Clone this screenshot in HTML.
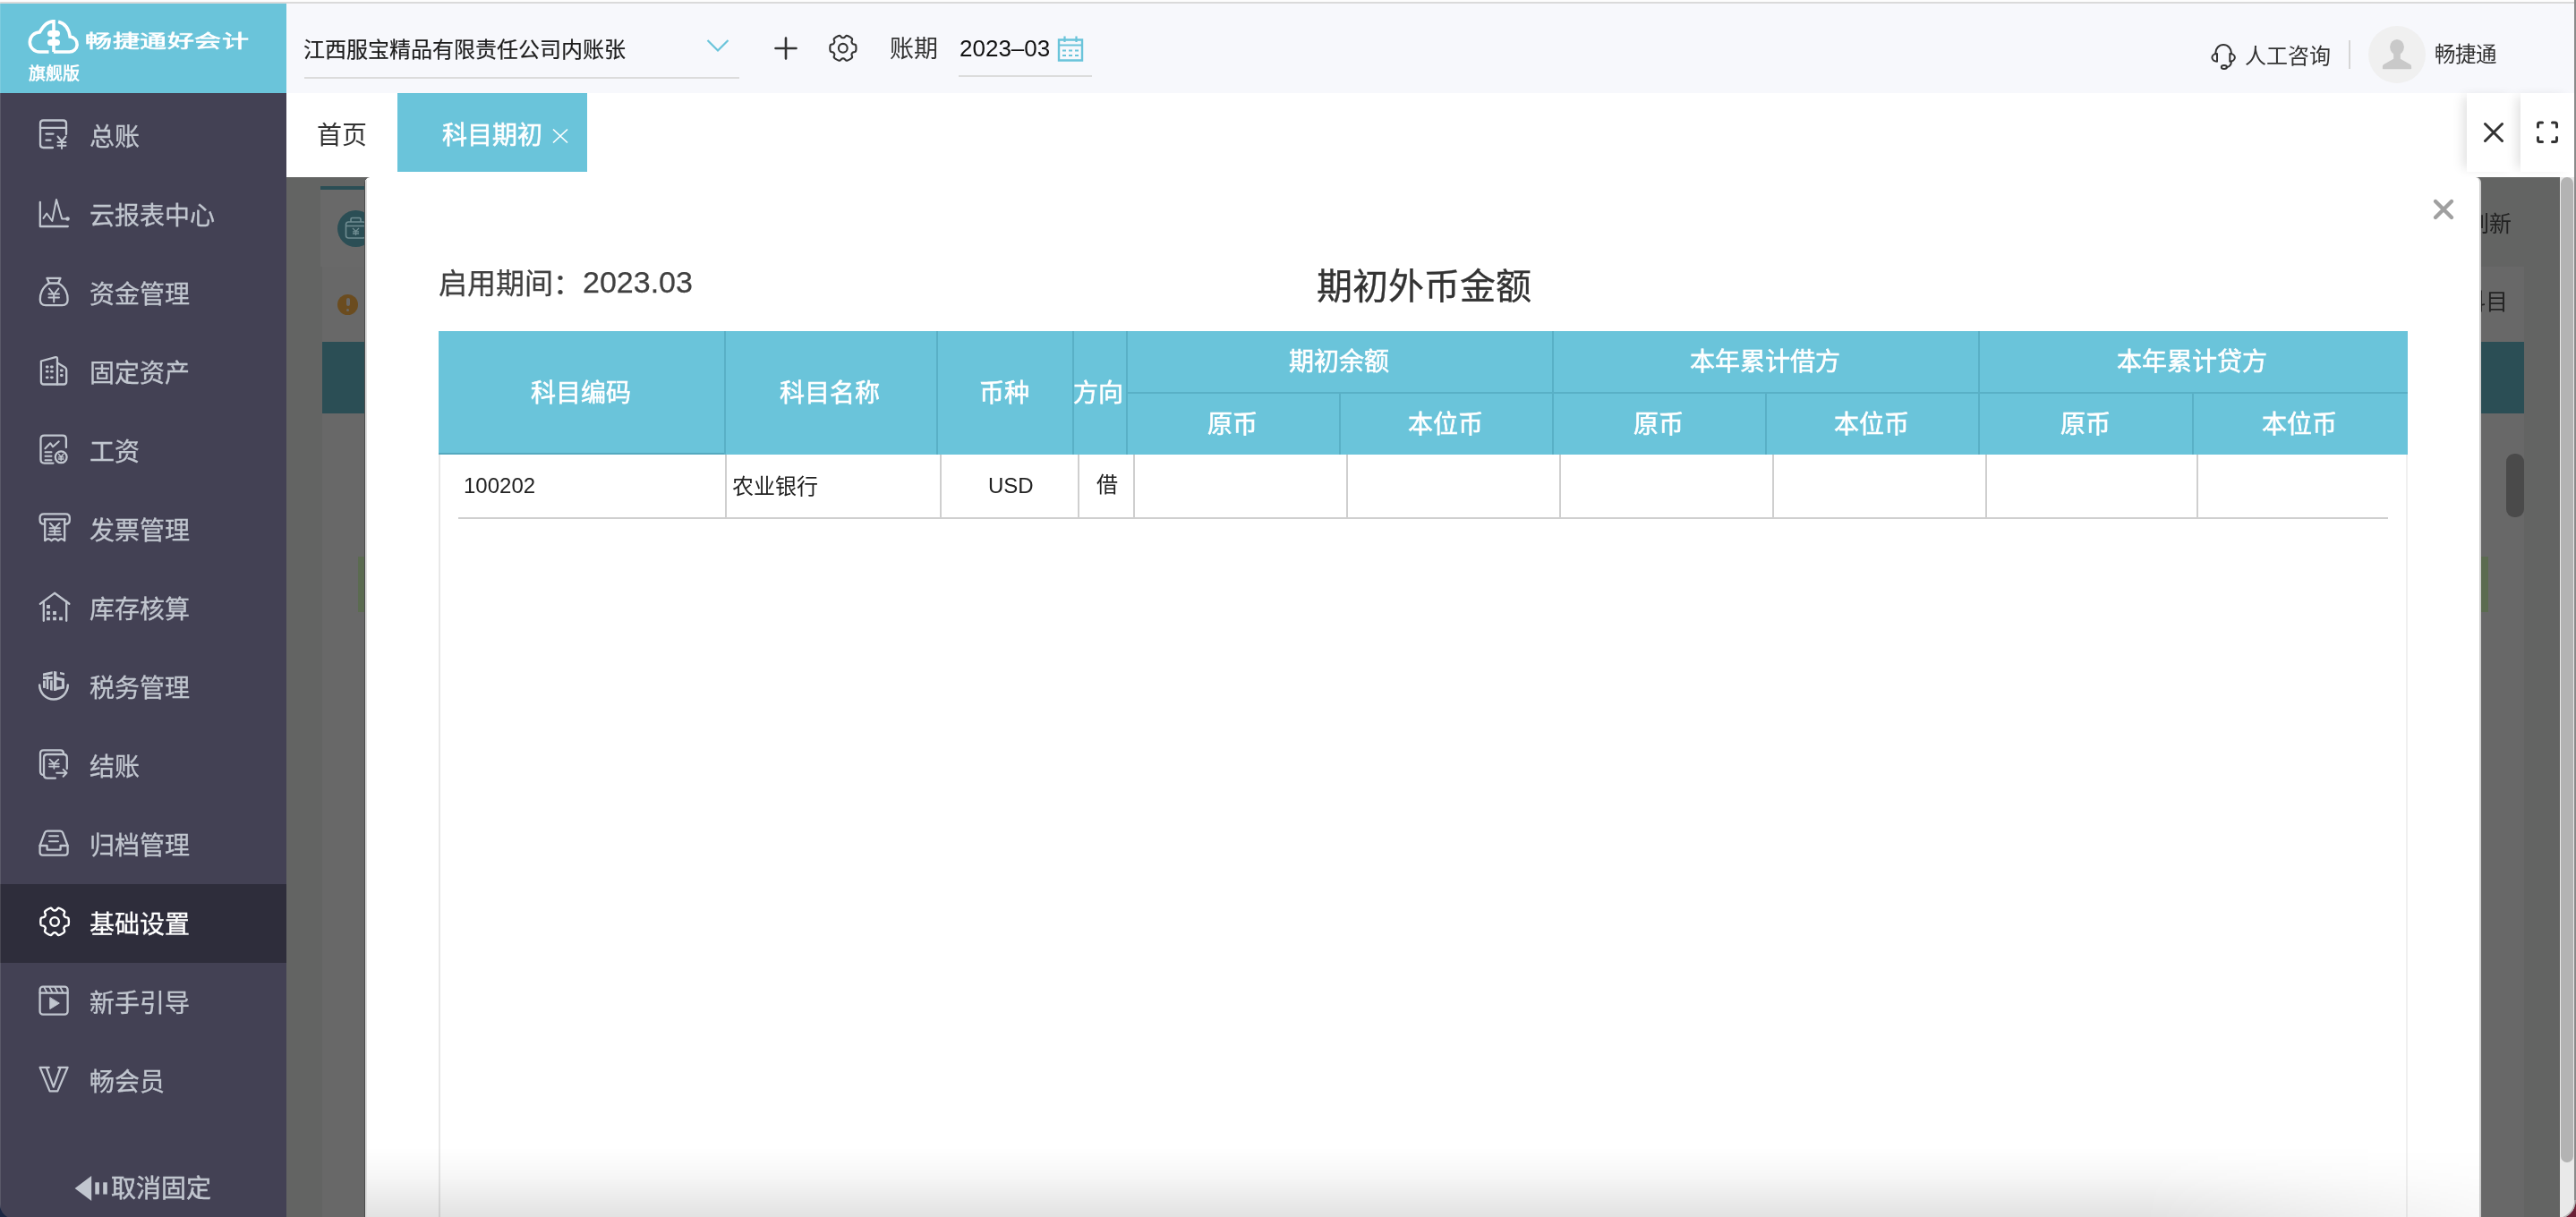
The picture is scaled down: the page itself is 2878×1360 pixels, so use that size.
<!DOCTYPE html>
<html lang="zh-CN">
<head>
<meta charset="utf-8">
<style>
html,body{margin:0;padding:0;width:2878px;height:1360px;overflow:hidden;background:#fff;font-family:"Liberation Sans",sans-serif;}
div,span,svg{position:absolute;box-sizing:border-box;}
.t{white-space:nowrap;line-height:1;will-change:transform;}
#sidebar .it{left:0;width:320px;height:88px;}
#sidebar .it .tx{left:100px;top:31px;font-size:28px;color:#c1c6cf;}
#sidebar .it svg{left:40px;top:26px;width:40px;height:38px;}
.sb{-webkit-text-stroke:0.3px currentColor;}
.th{color:#fff;font-size:28px;font-weight:500;-webkit-text-stroke:0.6px #fff;}
.vl{width:1px;background:#5aaec4;}
.bl{width:2px;background:#d3d3d3;}
</style>
</head>
<body>
<!-- top thin line -->
<div style="left:0;top:0;width:2878px;height:2px;background:#fdfdfd"></div>
<div style="left:0;top:2px;width:2878px;height:2px;background:#dadada"></div>

<!-- logo -->
<div id="logo" style="left:0;top:4px;width:320px;height:100px;background:#6ac4da"></div>

<!-- header -->
<div id="header" style="left:320px;top:4px;width:2558px;height:100px;background:#f7f8fc"></div>

<!-- sidebar -->
<div id="sidebar" style="left:0;top:104px;width:320px;height:1256px;background:#434154"></div>
<div style="left:0;top:988px;width:320px;height:88px;background:#2e2d3b"></div>
<div class="t sb" style="left:100px;top:140px;font-size:28px;color:#c1c6cf">总账</div>
<div class="t sb" style="left:100px;top:228px;font-size:28px;color:#c1c6cf">云报表中心</div>
<div class="t sb" style="left:100px;top:316px;font-size:28px;color:#c1c6cf">资金管理</div>
<div class="t sb" style="left:100px;top:404px;font-size:28px;color:#c1c6cf">固定资产</div>
<div class="t sb" style="left:100px;top:492px;font-size:28px;color:#c1c6cf">工资</div>
<div class="t sb" style="left:100px;top:580px;font-size:28px;color:#c1c6cf">发票管理</div>
<div class="t sb" style="left:100px;top:668px;font-size:28px;color:#c1c6cf">库存核算</div>
<div class="t sb" style="left:100px;top:756px;font-size:28px;color:#c1c6cf">税务管理</div>
<div class="t sb" style="left:100px;top:844px;font-size:28px;color:#c1c6cf">结账</div>
<div class="t sb" style="left:100px;top:932px;font-size:28px;color:#c1c6cf">归档管理</div>
<div class="t sb" style="left:100px;top:1020px;font-size:28px;color:#fff">基础设置</div>
<div class="t sb" style="left:100px;top:1108px;font-size:28px;color:#c1c6cf">新手引导</div>
<div class="t sb" style="left:100px;top:1196px;font-size:28px;color:#c1c6cf">畅会员</div>

<svg id="sideicons" style="left:0;top:0;width:320px;height:1360px" width="320" height="1360" viewBox="0 0 320 1360" fill="none" stroke="#c1c6cf" stroke-width="2.3" stroke-linecap="round" stroke-linejoin="round">
<!-- 总账 -->
<path d="M59,165 L48.5,165 Q45,165 45,161.5 L45,138 Q45,134.5 48.5,134.5 L70.5,134.5 Q74,134.5 74,138 L74,150"/>
<path d="M45,142.8 L74,142.8 M51.5,149.6 L59.5,149.6 M51.5,156.7 L56.5,156.7"/>
<path d="M64.5,152.5 L69,158 L73.5,152.5 M69,158 L69,166 M64.5,159 L73.5,159 M64.5,162.8 L73.5,162.8" stroke-width="2"/>
<!-- 云报表中心 -->
<path d="M44.8,226 L44.8,253 L75.8,253"/>
<path d="M48.5,243.9 L52.2,238.5 L58.3,247 L63,223 L69.2,244.5 L74,244.5" stroke-width="2"/>
<circle cx="75.5" cy="244.5" r="2.3" fill="#c1c6cf" stroke="none"/>
<!-- 资金管理 -->
<path d="M52.5,310.8 L67.5,310.8 L65,316.5 L55,316.5 Z"/>
<path d="M55,316.5 C47,321 44.5,329 44.8,335 Q45,341.2 51,341.2 L69.5,341.2 Q75.5,341.2 75.6,335 C76,329 73.5,321 65,316.5"/>
<path d="M55,322.5 L60.2,329 L65.4,322.5 M60.2,329 L60.2,337.5 M54.5,328.6 L66,328.6 M54.5,332.6 L66,332.6" stroke-width="2"/>
<!-- 固定资产 -->
<path d="M45.9,403.5 L62,399.2 Q64,398.8 64,401 L64,429.5 L49,429.5 Q45.9,429.5 45.9,426.5 Z"/>
<path d="M64,405.5 L72.5,410.5 Q74.2,411.5 74.2,413.5 L74.2,426.5 Q74.2,429.5 71,429.5 L64,429.5"/>
<path d="M52.2,410 L53.2,410 M57.4,410 L58.4,410 M52.2,415.2 L53.2,415.2 M57.4,415.2 L58.4,415.2 M52.2,421.8 L53.2,421.8 M57.4,421.8 L58.4,421.8 M68.3,414 L69.3,414 M68.3,419.5 L69.3,419.5" stroke-width="2.8"/>
<!-- 工资 -->
<path d="M59.5,517.6 L49.5,517.6 Q45.5,517.6 45.5,513.6 L45.5,490.7 Q45.5,486.7 49.5,486.7 L69.9,486.7 Q73.9,486.7 73.9,490.7 L73.9,500"/>
<path d="M50.4,501.3 L56.2,495.2 L59.1,499.3 L65.8,493.3" stroke-width="2"/>
<path d="M50.5,505.3 L57.5,505.3 M50.5,509.8 L57.5,509.8 M50.5,514.2 L57.5,514.2" stroke-width="2"/>
<circle cx="68.2" cy="510.8" r="6.4"/>
<path d="M65.6,507.5 L68.2,510.6 L70.8,507.5 M68.2,510.6 L68.2,514.8 M65.4,510.9 L71,510.9 M65.4,513 L71,513" stroke-width="1.4"/>
<!-- 发票管理 -->
<path d="M49,585.6 Q44.6,585.6 44.6,581 L44.6,578.8 Q44.6,574.4 49,574.4 L73.3,574.4 Q77.8,574.4 77.8,578.8 L77.8,581 Q77.8,585.6 73.3,585.6"/>
<path d="M49.6,580.3 L72.8,580.3"/>
<path d="M50.2,580.3 L50.2,604.2 Q54,600 57.5,604.2 Q61.3,600 65,604.2 Q68.7,600 72.2,604.2 L72.2,580.3"/>
<path d="M56,584.8 L61.2,590.2 L66.4,584.8 M61.2,590.2 L61.2,596 M55.5,590.3 L67,590.3 M55.5,593.8 L67,593.8 M54.2,597.6 L68,597.6" stroke-width="2"/>
<!-- 库存核算 -->
<path d="M44.8,674.8 L61,662.8 L77.4,674.8"/>
<path d="M48.8,672 L48.8,693.8 M74.2,672 L74.2,693.8"/>
<path d="M54,678 L54,678.1 M54,685 L54,685.1 M61,685 L61,685.1 M54,691.3 L54,691.4 M61,691.3 L61,691.4 M68,691.3 L68,691.4" stroke-width="3.8" stroke-linecap="square"/>
<!-- 税务管理 -->
<path d="M44.2,765.6 A15.8,15.8 0 0 0 75.8,765.6" stroke-width="2.5"/>
<path fill="#c1c6cf" stroke="none" d="M48,752.4 L58.7,750.2 L58.7,753.2 L48,755.4 Z M48,756.1 L58.7,756.1 L58.7,758.9 L48,758.9 Z M48,760.6 L50.8,760.6 L50.8,769.1 L48,768.7 Z M51.8,755.6 L54.3,755.6 L54.3,770.2 L51.8,769.9 Z M56,760.2 L58.7,760.2 L58.7,771.8 L56,771.3 Z M60,750 L63.4,750.6 L63.4,771.7 L60,772 Z M67,751 L72,752 L72,754.4 L67,753.6 Z M63.4,756.6 L72,758.2 L72,761.6 L63.4,760.1 Z M68.8,760.5 L72,760.8 L72,769.3 L68.8,769.3 Z M63.4,767.7 L72,766.6 L72,769.6 L63.4,771 Z"/>
<!-- 结账 -->
<path d="M48.8,866 Q45,866 45,862 L45,842 Q45,838.4 48.8,838.4 L67.5,838.4 Q71,838.4 71,842"/>
<path d="M62,869.6 L52.8,869.6 Q49,869.6 49,865.8 L49,846.8 Q49,843 52.8,843 L71,843 Q74.8,843 74.8,846.8 L74.8,859"/>
<path d="M55.5,848.6 L60.4,853.4 L65.3,848.6 M60.4,853.4 L60.4,858.8 M55,853.6 L65.8,853.6 M55,856.6 L65.8,856.6" stroke-width="1.8"/>
<path d="M63.2,863.8 L74.4,863.8 M70.6,859.9 L74.5,863.8 L70.6,867.7" stroke-width="2"/>
<!-- 归档管理 -->
<path d="M44.6,945 L50,930.6 Q50.8,928.6 53,928.6 L67.2,928.6 Q69.4,928.6 70.2,930.6 L75.6,945 L75.6,952.6 Q75.6,955.6 72.6,955.6 L47.6,955.6 Q44.6,955.6 44.6,952.6 Z"/>
<path d="M44.6,945 L52.6,945 L52.6,949.6 L67.6,949.6 L67.6,945 L75.6,945"/>
<path d="M55,934.2 L65,934.2 M55,940.2 L65,940.2" stroke-width="2"/>
<!-- 基础设置 -->
<path d="M76.90,1029.90L76.89,1030.45L76.86,1031.00L76.81,1031.55L76.75,1032.10L76.66,1032.64L76.55,1033.19L76.42,1033.72L75.88,1034.14L74.99,1034.41L74.04,1034.61L73.23,1034.80L72.66,1035.05L72.29,1035.36L72.05,1035.72L71.84,1036.10L71.62,1036.47L71.43,1036.86L71.33,1037.34L71.41,1037.95L71.65,1038.75L71.96,1039.67L72.16,1040.58L72.06,1041.25L71.67,1041.64L71.26,1042.00L70.83,1042.35L70.39,1042.68L69.94,1043.00L69.47,1043.30L69.00,1043.58L68.52,1043.85L68.03,1044.10L67.53,1044.33L67.02,1044.55L66.50,1044.75L65.98,1044.93L65.45,1045.07L64.82,1044.82L64.14,1044.19L63.49,1043.46L62.92,1042.86L62.42,1042.48L61.97,1042.32L61.53,1042.30L61.10,1042.30L60.67,1042.30L60.23,1042.32L59.78,1042.48L59.28,1042.86L58.71,1043.46L58.06,1044.19L57.38,1044.82L56.75,1045.07L56.22,1044.93L55.70,1044.75L55.18,1044.55L54.67,1044.33L54.17,1044.10L53.68,1043.85L53.20,1043.58L52.73,1043.30L52.26,1043.00L51.81,1042.68L51.37,1042.35L50.94,1042.00L50.53,1041.64L50.14,1041.25L50.04,1040.58L50.24,1039.67L50.55,1038.75L50.79,1037.95L50.87,1037.34L50.77,1036.86L50.58,1036.47L50.36,1036.10L50.15,1035.72L49.91,1035.36L49.54,1035.05L48.97,1034.80L48.16,1034.61L47.21,1034.41L46.32,1034.14L45.78,1033.72L45.65,1033.19L45.54,1032.64L45.45,1032.10L45.39,1031.55L45.34,1031.00L45.31,1030.45L45.30,1029.90L45.31,1029.35L45.34,1028.80L45.39,1028.25L45.45,1027.70L45.54,1027.16L45.65,1026.61L45.78,1026.08L46.32,1025.66L47.21,1025.39L48.16,1025.19L48.97,1025.00L49.54,1024.75L49.91,1024.44L50.15,1024.08L50.36,1023.70L50.58,1023.33L50.77,1022.94L50.87,1022.46L50.79,1021.85L50.55,1021.05L50.24,1020.13L50.04,1019.22L50.14,1018.55L50.53,1018.16L50.94,1017.80L51.37,1017.45L51.81,1017.12L52.26,1016.80L52.73,1016.50L53.20,1016.22L53.68,1015.95L54.17,1015.70L54.67,1015.47L55.18,1015.25L55.70,1015.05L56.22,1014.87L56.75,1014.73L57.38,1014.98L58.06,1015.61L58.71,1016.34L59.28,1016.94L59.78,1017.32L60.23,1017.48L60.67,1017.50L61.10,1017.50L61.53,1017.50L61.97,1017.48L62.42,1017.32L62.92,1016.94L63.49,1016.34L64.14,1015.61L64.82,1014.98L65.45,1014.73L65.98,1014.87L66.50,1015.05L67.02,1015.25L67.53,1015.47L68.03,1015.70L68.52,1015.95L69.00,1016.22L69.47,1016.50L69.94,1016.80L70.39,1017.12L70.83,1017.45L71.26,1017.80L71.67,1018.16L72.06,1018.55L72.16,1019.22L71.96,1020.13L71.65,1021.05L71.41,1021.85L71.33,1022.46L71.43,1022.94L71.62,1023.33L71.84,1023.70L72.05,1024.08L72.29,1024.44L72.66,1024.75L73.23,1025.00L74.04,1025.19L74.99,1025.39L75.88,1025.66L76.42,1026.08L76.55,1026.61L76.66,1027.16L76.75,1027.70L76.81,1028.25L76.86,1028.80L76.89,1029.35Z" stroke="#ffffff" stroke-width="2.4"/>
<circle cx="61.1" cy="1029.9" r="4.8" stroke="#ffffff" stroke-width="2.4"/>
<!-- 新手引导 -->
<rect x="44.6" y="1102.6" width="31" height="31" rx="3.4"/>
<path d="M44.6,1109.6 L75.6,1109.6"/>
<path d="M49.5,1103.5 L52.3,1108.8 M55.5,1103.5 L58.3,1108.8 M61.5,1103.5 L64.3,1108.8 M67.5,1103.5 L70.3,1108.8" stroke-width="1.8"/>
<path d="M55.8,1115 L55.8,1127.6 L66,1121.3 Z" fill="#c1c6cf" stroke-width="1"/>
<!-- 畅会员 -->
<path d="M44.6,1192.8 L54.8,1192.8 M65.2,1192.8 L75.6,1192.8 M44.6,1192.8 L55.6,1219.4 L64.3,1219.4 L75.6,1192.8 M51.8,1192.8 L59.8,1214.6 L67.6,1192.8" stroke-width="2.2"/>
</svg>


<!-- tab bar -->
<div id="tabs" style="left:320px;top:104px;width:2558px;height:94px;background:#fff"></div>

<!-- logo content -->
<svg style="left:0;top:0;width:320px;height:104px" width="320" height="104" viewBox="0 0 320 104" fill="none" stroke="#fff" stroke-width="3.6">
<path d="M54.5,58 L44.3,58 A11,11 0 0 1 44.3,36 C49,28 53,24 60,23.9"/>
<path d="M65.1,24.2 C72,26 77,32 78.2,41 A8.5,8.5 0 0 1 77.1,58 L59.9,58"/>
<path d="M60,22 L60,58"/>
<rect x="53" y="34" width="14" height="7" rx="3.5" fill="#fff" stroke="none"/>
<rect x="53" y="43.9" width="14" height="7" rx="3.5" fill="#fff" stroke="none"/>
</svg>
<div class="t" id="logotx" style="left:95px;top:35.5px;font-size:30px;font-weight:500;color:#fff;letter-spacing:0.5px;transform-origin:0 0;transform:scaleY(0.67);-webkit-text-stroke:1px #fff">畅捷通好会计</div>
<div class="t" id="logosub" style="left:32px;top:73px;font-size:19px;font-weight:bold;color:#fff">旗舰版</div>

<!-- header content -->
<div class="t" id="company" style="left:339px;top:44px;font-size:24px;color:#1c1c1c;-webkit-text-stroke:0.2px #1c1c1c">江西服宝精品有限责任公司内账张</div>
<div style="left:340px;top:86px;width:486px;height:2px;background:#dcdcdc"></div>
<svg style="left:786px;top:40px;width:32px;height:22px" width="32" height="22" viewBox="0 0 32 22" fill="none" stroke="#6ac4da" stroke-width="2.2"><path d="M4.5,5 L16,16.5 L27.5,5"/></svg>
<svg style="left:860px;top:36px;width:36px;height:36px" width="36" height="36" viewBox="0 0 36 36" fill="none" stroke="#333" stroke-width="2.6" stroke-linecap="round"><path d="M18,6.5 L18,29.5 M6.5,18 L29.5,18"/></svg>
<svg style="left:0;top:0;width:1000px;height:104px" width="1000" height="104" viewBox="0 0 1000 104" fill="none" stroke="#333" stroke-width="2.1" stroke-linejoin="round"><path d="M956.50,53.80L956.49,54.31L956.46,54.82L956.42,55.33L956.36,55.83L956.28,56.34L956.18,56.84L956.05,57.33L955.57,57.72L954.78,57.99L953.94,58.18L953.21,58.37L952.70,58.61L952.37,58.91L952.15,59.25L951.95,59.60L951.74,59.95L951.56,60.31L951.46,60.75L951.52,61.31L951.71,62.03L951.97,62.87L952.13,63.68L952.03,64.29L951.67,64.65L951.28,64.98L950.89,65.30L950.48,65.61L950.06,65.90L949.64,66.18L949.20,66.44L948.75,66.69L948.30,66.92L947.84,67.14L947.37,67.34L946.89,67.52L946.41,67.69L945.92,67.82L945.34,67.60L944.72,67.05L944.12,66.41L943.60,65.88L943.14,65.56L942.71,65.42L942.30,65.40L941.90,65.40L941.50,65.40L941.09,65.42L940.66,65.56L940.20,65.88L939.68,66.41L939.08,67.05L938.46,67.60L937.88,67.82L937.39,67.69L936.91,67.52L936.43,67.34L935.96,67.14L935.50,66.92L935.05,66.69L934.60,66.44L934.16,66.18L933.74,65.90L933.32,65.61L932.91,65.30L932.52,64.98L932.13,64.65L931.77,64.29L931.67,63.68L931.83,62.87L932.09,62.03L932.28,61.31L932.34,60.75L932.24,60.31L932.06,59.95L931.85,59.60L931.65,59.25L931.43,58.91L931.10,58.61L930.59,58.37L929.86,58.18L929.02,57.99L928.23,57.72L927.75,57.33L927.62,56.84L927.52,56.34L927.44,55.83L927.38,55.33L927.34,54.82L927.31,54.31L927.30,53.80L927.31,53.29L927.34,52.78L927.38,52.27L927.44,51.77L927.52,51.26L927.62,50.76L927.75,50.27L928.23,49.88L929.02,49.61L929.86,49.42L930.59,49.23L931.10,48.99L931.43,48.69L931.65,48.35L931.85,48.00L932.06,47.65L932.24,47.29L932.34,46.85L932.28,46.29L932.09,45.57L931.83,44.73L931.67,43.92L931.77,43.31L932.13,42.95L932.52,42.62L932.91,42.30L933.32,41.99L933.74,41.70L934.16,41.42L934.60,41.16L935.05,40.91L935.50,40.68L935.96,40.46L936.43,40.26L936.91,40.08L937.39,39.91L937.88,39.78L938.46,40.00L939.08,40.55L939.68,41.19L940.20,41.72L940.66,42.04L941.09,42.18L941.50,42.20L941.90,42.20L942.30,42.20L942.71,42.18L943.14,42.04L943.60,41.72L944.12,41.19L944.72,40.55L945.34,40.00L945.92,39.78L946.41,39.91L946.89,40.08L947.37,40.26L947.84,40.46L948.30,40.68L948.75,40.91L949.20,41.16L949.64,41.42L950.06,41.70L950.48,41.99L950.89,42.30L951.28,42.62L951.67,42.95L952.03,43.31L952.13,43.92L951.97,44.73L951.71,45.57L951.52,46.29L951.46,46.85L951.56,47.29L951.74,47.65L951.95,48.00L952.15,48.35L952.37,48.69L952.70,48.99L953.21,49.23L953.94,49.42L954.78,49.61L955.57,49.88L956.05,50.27L956.18,50.76L956.28,51.26L956.36,51.77L956.42,52.27L956.46,52.78L956.49,53.29Z"/><circle cx="941.8" cy="53.8" r="4.9"/></svg>
<div class="t" id="zq" style="left:994px;top:42px;font-size:27px;color:#333">账期</div>
<div class="t" id="date" style="left:1072px;top:41px;font-size:26px;color:#111">2023–03</div>
<svg style="left:1180px;top:38px;width:32px;height:32px" width="32" height="32" viewBox="0 0 32 32" fill="none" stroke="#6ac4da" stroke-width="2.4">
<path d="M3,6.5 L29,6.5 L29,29.5 L3,29.5 Z"/><path d="M3,12.5 L29,12.5" stroke-width="2"/>
<path d="M9.5,2.5 L9.5,9 M22.5,2.5 L22.5,9" stroke-width="2.2"/>
<path d="M7,18.5 L11,18.5 M14,18.5 L18,18.5 M21,18.5 L25,18.5 M7,24 L11,24 M14,24 L18,24 M21,24 L25,24" stroke-width="1.8"/>
</svg>
<div style="left:1071px;top:84px;width:149px;height:2px;background:#dcdcdc"></div>

<svg style="left:2460px;top:40px;width:50px;height:45px" width="50" height="45" viewBox="0 0 50 45" fill="none" stroke="#333" stroke-width="2" stroke-linejoin="round">
<path d="M15.2,20.5 L15.2,19.5 A8.9,9.6 0 0 1 33,19.5 L33,20.5"/>
<path d="M17,20 L17,28.7 A5.6,4.35 0 0 1 17,20 Z"/>
<path d="M31.3,20 L31.3,28.7 A5.6,4.35 0 0 0 31.3,20 Z"/>
<path d="M33,28.8 Q32.6,34.4 27.6,35.2" stroke-linecap="round"/>
<ellipse cx="24.9" cy="35.1" rx="3.1" ry="2"/>
</svg>
<div class="t" id="rg" style="left:2508px;top:51px;font-size:24px;color:#333">人工咨询</div>
<div style="left:2624px;top:45px;width:2px;height:32px;background:#d6d6d6"></div>
<div style="left:2646px;top:29px;width:64px;height:64px;border-radius:50%;background:#f0f0f0"></div>
<svg style="left:2646px;top:29px;width:64px;height:64px" width="64" height="64" viewBox="0 0 64 64" fill="#c9c9c9">
<ellipse cx="32" cy="23.6" rx="7.9" ry="8.6"/>
<path d="M28.2,30 L28.2,36.8 L17.2,43 Q15.9,43.8 15.9,45.3 L15.9,47.4 Q15.9,48.2 16.7,48.2 L47.3,48.2 Q48.1,48.2 48.1,47.4 L48.1,45.3 Q48.1,43.8 46.8,43 L35.8,36.8 L35.8,30 Z"/>
</svg>
<div class="t" id="cjt" style="left:2720px;top:50px;font-size:23.5px;color:#333">畅捷通</div>

<!-- tabs content -->
<div class="t" id="home" style="left:354px;top:138px;font-size:28px;color:#333">首页</div>
<div style="left:444px;top:104px;width:212px;height:88px;background:#6ac4da"></div>
<div class="t" id="kmqc" style="left:494px;top:138px;font-size:28px;font-weight:500;color:#fff;-webkit-text-stroke:0.6px #fff">科目期初</div>
<svg style="left:612px;top:139px;width:28px;height:26px" width="28" height="26" viewBox="0 0 28 26" fill="none" stroke="#fff" stroke-width="1.7"><path d="M6,5.5 L22,20.5 M22,5.5 L6,20.5"/></svg>
<div style="left:2756px;top:104px;width:60px;height:88px;background:#fff;box-shadow:-8px 0 12px -4px rgba(0,0,0,0.12)"></div>
<div style="left:2816px;top:104px;width:60px;height:88px;background:#fff;box-shadow:-8px 0 12px -4px rgba(0,0,0,0.12)"></div>
<svg style="left:2766px;top:128px;width:40px;height:40px" width="40" height="40" viewBox="0 0 40 40" fill="none" stroke="#333" stroke-width="3" stroke-linecap="round"><path d="M10.5,10.5 L29.5,29.5 M29.5,10.5 L10.5,29.5"/></svg>
<svg style="left:2826px;top:128px;width:40px;height:40px" width="40" height="40" viewBox="0 0 40 40" fill="none" stroke="#333" stroke-width="3" stroke-linecap="round" stroke-linejoin="round">
<path d="M9.5,14 L9.5,11 Q9.5,9 11.5,9 L14.5,9 M25.5,9 L28.5,9 Q30.5,9 30.5,11 L30.5,14 M30.5,25.5 L30.5,28.5 Q30.5,30.5 28.5,30.5 L25.5,30.5 M14.5,30.5 L11.5,30.5 Q9.5,30.5 9.5,28.5 L9.5,25.5"/>
</svg>

<!-- overlay / background content -->
<div id="overlay" style="left:320px;top:198px;width:2540px;height:1162px;background:#636463"></div>
<div style="left:358px;top:208px;width:50px;height:4px;background:#2b4e55"></div>
<div style="left:358px;top:212px;width:50px;height:86px;background:#696969"></div>
<div style="left:360px;top:298px;width:48px;height:1062px;background:#686868"></div>
<div style="left:2772px;top:298px;width:48px;height:1062px;background:#686868"></div>
<div style="left:377px;top:235px;width:41px;height:41px;border-radius:50%;background:#2b4e55"></div>
<svg style="left:377px;top:235px;width:41px;height:41px" width="41" height="41" viewBox="0 0 41 41" fill="none" stroke="#6f8c91" stroke-width="1.6"><rect x="9.5" y="13" width="22" height="18" rx="3"/><path d="M15,13 L15,10 Q15,8.5 16.5,8.5 L24.5,8.5 Q26,8.5 26,10 L26,13 M9.5,17.5 L31.5,17.5"/><path d="M17,20 L20.5,23.5 L24,20 M20.5,23.5 L20.5,28 M17,23.8 L24,23.8 M17,26 L24,26" stroke-width="1.3"/></svg>
<div style="left:377px;top:329px;width:23px;height:23px;border-radius:50%;background:#6b4c1f"></div>
<div style="left:386.5px;top:333px;width:4px;height:9px;border-radius:2px;background:#686868"></div>
<div style="left:387px;top:344.5px;width:3px;height:3px;border-radius:50%;background:#686868"></div>
<div style="left:360px;top:382px;width:48px;height:80px;background:#2b4e55"></div>
<div style="left:2772px;top:382px;width:48px;height:80px;background:#2b4e55"></div>
<div style="left:400px;top:622px;width:8px;height:62px;background:#5b6b50"></div>
<div style="left:2772px;top:622px;width:8px;height:62px;background:#5b6b50"></div>
<div style="left:2800px;top:507px;width:20px;height:71px;border-radius:9px;background:#4a4a4a"></div>
<div style="left:0;top:0;width:1px;height:1360px;background:rgba(255,255,255,0.12)"></div>
<div class="t" style="left:2756px;top:238px;font-size:25px;color:#222">刷新</div>
<div class="t" style="left:2752px;top:325px;font-size:25px;color:#222">科目</div>
<!-- scrollbar -->
<div style="left:2860px;top:198px;width:16px;height:1162px;background:#e9e9e9"></div>
<div style="left:2861px;top:198px;width:14px;height:1101px;border-radius:7px;background:#b3b3b3"></div>
<div style="left:2876px;top:0;width:2px;height:1360px;background:#8a8a8a"></div>

<!-- modal -->
<div id="modal" style="left:407px;top:198px;width:1366px;height:1162px;background:#fff;border-left:1px solid #4a4a4a;border-top-left-radius:6px"></div>
<div style="left:1400px;top:198px;width:1372px;height:1162px;background:#fff;border-right:2px solid #cfcfcf;border-top-right-radius:6px"></div>
<div style="left:408px;top:201px;width:2px;height:1159px;background:#dcdcdc"></div>
<svg style="left:2710px;top:214px;width:40px;height:40px;filter:blur(0.6px)" width="40" height="40" viewBox="0 0 40 40" fill="none" stroke="#a0a0a0" stroke-width="4.4" stroke-linecap="round"><path d="M11,11 L29,29 M29,11 L11,29"/></svg>
<div class="t" id="qyqj" style="left:490px;top:301px;font-size:32px;color:#404040;-webkit-text-stroke:0.25px #404040">启用期间：</div>
<div class="t" id="qyqj2" style="left:651px;top:298px;font-size:34px;color:#404040;-webkit-text-stroke:0.25px #404040">2023.03</div>
<div class="t" id="title" style="left:1471px;top:300px;font-size:40px;color:#333;-webkit-text-stroke:0.35px #333">期初外币金额</div>

<div style="left:490px;top:370px;width:2200px;height:138px;background:#6ac4da"></div>
<div style="left:490px;top:506px;width:319px;height:2px;background:#54a9bf"></div>
<div style="left:809px;top:370px;width:2px;height:138px;background:#59b0c6"></div>
<div style="left:1046px;top:370px;width:2px;height:138px;background:#59b0c6"></div>
<div style="left:1198px;top:370px;width:2px;height:138px;background:#59b0c6"></div>
<div style="left:1258px;top:370px;width:2px;height:138px;background:#59b0c6"></div>
<div style="left:1734px;top:370px;width:2px;height:138px;background:#59b0c6"></div>
<div style="left:2210px;top:370px;width:2px;height:138px;background:#59b0c6"></div>
<div style="left:1496px;top:439px;width:2px;height:69px;background:#59b0c6"></div>
<div style="left:1972px;top:439px;width:2px;height:69px;background:#59b0c6"></div>
<div style="left:2449px;top:439px;width:2px;height:69px;background:#59b0c6"></div>
<div style="left:1258px;top:438px;width:1432px;height:2px;background:#59b0c6"></div>
<div class="t th" style="left:348.5px;top:426px;width:600px;text-align:center">科目编码</div>
<div class="t th" style="left:627px;top:426px;width:600px;text-align:center">科目名称</div>
<div class="t th" style="left:822px;top:426px;width:600px;text-align:center">币种</div>
<div class="t th" style="left:927px;top:426px;width:600px;text-align:center">方向</div>
<div class="t th" style="left:1196px;top:391px;width:600px;text-align:center">期初余额</div>
<div class="t th" style="left:1672px;top:391px;width:600px;text-align:center">本年累计借方</div>
<div class="t th" style="left:2149px;top:391px;width:600px;text-align:center">本年累计贷方</div>
<div class="t th" style="left:1077px;top:461px;width:600px;text-align:center">原币</div>
<div class="t th" style="left:1315px;top:461px;width:600px;text-align:center">本位币</div>
<div class="t th" style="left:1553px;top:461px;width:600px;text-align:center">原币</div>
<div class="t th" style="left:1791px;top:461px;width:600px;text-align:center">本位币</div>
<div class="t th" style="left:2029.5px;top:461px;width:600px;text-align:center">原币</div>
<div class="t th" style="left:2269px;top:461px;width:600px;text-align:center">本位币</div>
<div style="left:490px;top:508px;width:2px;height:852px;background:#e8e8e8"></div>
<div style="left:2688px;top:508px;width:2px;height:852px;background:#f0f0f0"></div>
<div style="left:512px;top:578px;width:2156px;height:2px;background:#cfcfcf"></div>
<div style="left:810px;top:508px;width:2px;height:70px;background:#cfcfcf"></div>
<div style="left:1050px;top:508px;width:2px;height:70px;background:#cfcfcf"></div>
<div style="left:1204px;top:508px;width:2px;height:70px;background:#cfcfcf"></div>
<div style="left:1266px;top:508px;width:2px;height:70px;background:#cfcfcf"></div>
<div style="left:1504px;top:508px;width:2px;height:70px;background:#cfcfcf"></div>
<div style="left:1742px;top:508px;width:2px;height:70px;background:#cfcfcf"></div>
<div style="left:1980px;top:508px;width:2px;height:70px;background:#cfcfcf"></div>
<div style="left:2218px;top:508px;width:2px;height:70px;background:#cfcfcf"></div>
<div style="left:2454px;top:508px;width:2px;height:70px;background:#cfcfcf"></div>
<div class="t" id="c1" style="left:518px;top:531px;font-size:24px;color:#222">100202</div>
<div class="t" id="c2" style="left:818px;top:532px;font-size:24px;color:#222">农业银行</div>
<div class="t" id="c3" style="left:1104px;top:531px;font-size:24px;color:#222">USD</div>
<div class="t" id="c4" style="left:1225px;top:530px;font-size:24px;color:#222">借</div>
<div style="left:410px;top:1282px;width:2362px;height:78px;background:linear-gradient(to bottom, rgba(0,0,0,0) 0%, rgba(0,0,0,0.03) 40%, rgba(0,0,0,0.115) 100%);-webkit-mask-image:linear-gradient(to right,#000 0%,#000 84%,rgba(0,0,0,0.25) 100%)"></div>

<!-- unpin -->
<svg style="left:0;top:1290px;width:320px;height:70px" width="320" height="70" viewBox="0 1290 320 70" fill="#c1c6cf">
<path d="M83.6,1328 L102.2,1314 L102.2,1342 Z"/>
<rect x="106.3" y="1321.3" width="4.6" height="13.3"/>
<rect x="115.2" y="1321.3" width="4.6" height="13.3"/>
</svg>
<div class="t" id="unpin" style="left:124px;top:1315px;font-size:28px;color:#c1c6cf;-webkit-text-stroke:0.5px #c1c6cf">取消固定</div>
<!-- window corners -->
<svg style="left:0;top:1330px;width:30px;height:30px" width="30" height="30" viewBox="0 1330 30 30"><path d="M0,1346 A16,16 0 0 0 16,1362 L0,1362 Z" fill="#1b2743"/></svg>
<svg style="left:2848px;top:1330px;width:30px;height:30px" width="30" height="30" viewBox="2848 1330 30 30"><path d="M2878,1341 A21,21 0 0 1 2857,1362 L2878,1362 Z" fill="#6a2035"/><path d="M2877,1341 A21,21 0 0 1 2856,1362" fill="none" stroke="#b5b5b5" stroke-width="1.5"/></svg>
</body>
</html>
